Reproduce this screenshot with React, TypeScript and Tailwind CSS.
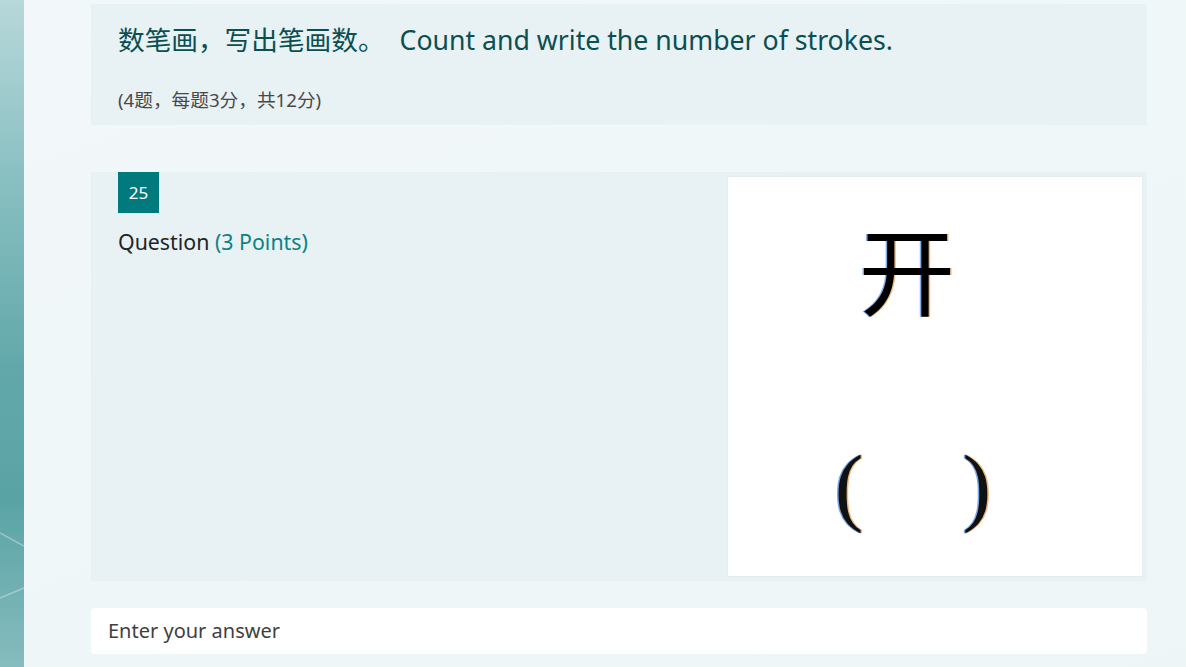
import React from "react";

const sans = "font-['Noto_Sans','Noto_Sans_CJK_SC',sans-serif]";

export default function App() {
  return (
    <div className={`flex w-[1186px] h-[667px] overflow-hidden ${sans}`}>
      <div className="relative w-[24px] shrink-0 bg-[linear-gradient(180deg,#b8d8da_0%,#8cc1c3_25%,#62a8aa_55%,#5aa3a5_75%,#86bcbe_100%)]">
        <svg className="absolute inset-0" width="24" height="667" viewBox="0 0 24 667">
          <line x1="0" y1="533" x2="24" y2="546" stroke="rgba(255,255,255,0.35)" strokeWidth="1.5" />
          <line x1="0" y1="598" x2="24" y2="588" stroke="rgba(255,255,255,0.35)" strokeWidth="1.5" />
        </svg>
      </div>
      <div className="flex-1 bg-[linear-gradient(160deg,#f2f8f9_0%,#f0f7f8_50%,#edf5f6_100%)] pl-[67px] pr-[39px] pt-[4px] flex flex-col">
        <div className="bg-[#e8f1f4] px-[27px] pt-[17px] pb-[12px]">
          <div className="flex text-[26.67px] leading-[38px] text-[#0b4f51] whitespace-nowrap">
            <span>数笔画，写出笔画数。</span>
            <span className="ml-[15px]">Count and write the number of strokes.</span>
          </div>
          <div className="mt-[28px] text-[18.67px] leading-[26px] text-[#484848]">
            (4题，每题3分，共12分)
          </div>
        </div>

        <div className="mt-[47px] bg-[#e8f1f4] flex h-[409px]">
          <div className="flex-1 pl-[27px] flex flex-col">
            <div className="w-[41px] h-[41px] bg-[#007a7c] text-white text-[17px] flex items-center justify-center">
              25
            </div>
            <div className="mt-[15px] text-[21.33px] leading-[28px] text-[#242424]">
              Question <span className="text-[#0b8385]">(3 Points)</span>
            </div>
          </div>
          <div className="m-[4px] w-[416px] bg-white flex flex-col items-center border border-[#e3edf0]">
            <div className="mt-[35px] ml-[-56px] text-[96px] leading-[110px] text-black font-['Noto_Sans_CJK_SC',serif] [text-shadow:1.5px_0_0_rgba(220,140,40,0.55),-1.5px_0_0_rgba(30,110,220,0.55)]">
              开
            </div>
            <div className="mt-[114px] ml-[-44px] flex gap-[99px] text-[86px] leading-[100px] text-[#111] font-['Liberation_Serif',serif] [text-shadow:1.5px_0_0_rgba(220,140,40,0.6),-1.5px_0_0_rgba(30,110,220,0.6)]">
              <span>(</span>
              <span>)</span>
            </div>
          </div>
        </div>

        <div className="mt-[27px] h-[46px] bg-white rounded-[4px] flex items-center pl-[17px] text-[20px] text-[#3f3f3f]">
          Enter your answer
        </div>
      </div>
    </div>
  );
}
